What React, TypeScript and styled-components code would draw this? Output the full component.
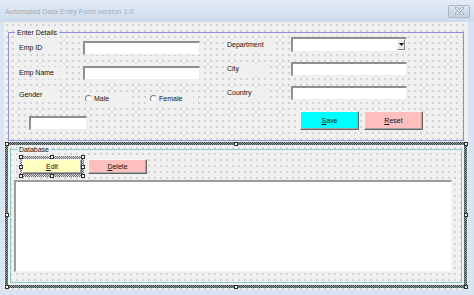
import React from 'react';
import styled, { createGlobalStyle } from 'styled-components';

const GlobalStyle = createGlobalStyle`
  html, body {
    margin: 0;
    padding: 0;
  }
  body {
    background: #d8e4f2;
    font-family: "Liberation Sans", Arial, sans-serif;
  }
`;

const dots = `
  background-color: #f0f0f0;
  background-image: radial-gradient(circle, #bcbcbc 0.55px, transparent 0.9px);
  background-size: 6px 6px;
  background-position: 0 0;
`;

const Window = styled.div`
  width: 474px;
  height: 295px;
  display: flex;
  flex-direction: column;
  background: #d8e4f2;
  overflow: hidden;
`;

const TitleBar = styled.div`
  height: 22px;
  flex: none;
  display: flex;
  align-items: center;
  justify-content: space-between;
  padding: 0 4px 0 5px;
  background: linear-gradient(#e3ecf7, #ccdaeb);
`;

const Title = styled.span`
  font-size: 7.3px;
  color: #a2acb8;
`;

const CloseButton = styled.div`
  width: 22px;
  height: 13px;
  box-sizing: border-box;
  border: 1px solid #a9b7c9;
  border-radius: 2px;
  background: linear-gradient(#dbe5f0, #c4d2e3);
  display: flex;
  align-items: center;
  justify-content: center;
`;

const Canvas = styled.div`
  flex: 1;
  margin: 0 6px 5px 4px;
  padding: 10px 0 0 4px;
  box-sizing: border-box;
  display: flex;
  flex-direction: column;
  ${dots}
`;

const Frame = styled.div<{ $color: string }>`
  position: relative;
  box-sizing: border-box;
  border: 1px solid ${p => p.$color};
`;

const Caption = styled.span`
  position: absolute;
  top: -5px;
  left: 6px;
  padding: 0 2px;
  font-size: 7px;
  line-height: 9px;
  color: #111;
  background: #f0f0f0;
`;

const DetailsFrame = styled(Frame)`
  width: 456px;
  height: 109px;
  display: flex;
  padding-left: 10px;
`;

const Column = styled.div<{ $w: number; $ml?: number }>`
  width: ${p => p.$w}px;
  margin-left: ${p => p.$ml ?? 0}px;
  display: flex;
  flex-direction: column;
`;

const Row = styled.div<{ $mt: number; $h: number; $pl?: number; $gap?: number }>`
  display: flex;
  align-items: center;
  margin-top: ${p => p.$mt}px;
  height: ${p => p.$h}px;
  padding-left: ${p => p.$pl ?? 0}px;
  gap: ${p => p.$gap ?? 0}px;
`;

const LabelSlot = styled.div<{ $top?: boolean }>`
  width: 67px;
  flex: none;
  display: flex;
  align-self: ${p => (p.$top ? 'flex-start' : 'center')};
  margin-left: -3px;
`;

const Label = styled.span<{ $w: number }>`
  width: ${p => p.$w}px;
  box-sizing: border-box;
  padding: 1px 3px 2px;
  font-size: 7px;
  line-height: 9px;
  color: #111;
  background: #f0f0f0;
`;

const TextBox = styled.div<{ $w: number; $ml?: number }>`
  width: ${p => p.$w}px;
  height: 100%;
  margin-left: ${p => p.$ml ?? 0}px;
  box-sizing: border-box;
  background: #fff;
  border-style: solid;
  border-width: 2px 1px 1px 2px;
  border-color: #8f8f8f #ececec #ececec #8f8f8f;
`;

const Combo = styled(TextBox)`
  display: flex;
  justify-content: flex-end;
  align-items: stretch;
  padding: 0 1px 1px 0;
`;

const DropButton = styled.div`
  width: 8px;
  box-sizing: border-box;
  background: #ececec;
  border-style: solid;
  border-width: 1px;
  border-color: #fafafa #7a7a7a #7a7a7a #fafafa;
  display: flex;
  align-items: center;
  justify-content: center;
`;

const RadioGroup = styled.div`
  display: flex;
  align-self: flex-end;
  height: 11px;
  margin-bottom: -1px;
`;

const RadioItem = styled.label<{ $w: number; $mr?: number }>`
  width: ${p => p.$w}px;
  margin-right: ${p => p.$mr ?? 0}px;
  display: flex;
  align-items: center;
  gap: 2px;
  padding-left: 2px;
  box-sizing: border-box;
  font-size: 7px;
  color: #111;
  background: #f0f0f0;
`;

const RadioDot = styled.span`
  width: 7px;
  height: 7px;
  flex: none;
  box-sizing: border-box;
  border-radius: 50%;
  background: #fff;
  border: 1px solid #7c7c7c;
  border-right-color: #e6e6e6;
  border-bottom-color: #e6e6e6;
`;

const CommandButton = styled.div<{ $bg: string; $w: number; $h: number }>`
  width: ${p => p.$w}px;
  height: ${p => p.$h}px;
  box-sizing: border-box;
  background: ${p => p.$bg};
  border-style: solid;
  border-width: 1px;
  border-color: #f6f6f6 #646464 #646464 #f6f6f6;
  box-shadow: inset -1px -1px 0 #a6a6a6;
  display: flex;
  align-items: center;
  justify-content: center;
  font-size: 7px;
  color: #111;
`;

const checker = (a: string, b: string) => `
  background: repeating-conic-gradient(${a} 0 25%, ${b} 0 50%) 0 0 / 2px 2px;
`;

const SelectionBox = styled.div`
  position: relative;
  margin: 1px 0 0 -3px;
  width: 462px;
  height: 146px;
  padding: 3px;
  box-sizing: border-box;
  ${checker('#3b4949', '#8c9c9c')}
`;

const DbSurface = styled.div`
  height: 100%;
  box-sizing: border-box;
  padding: 4px 2px 2px 2px;
  ${dots}
`;

const DbFrame = styled(Frame)`
  height: 100%;
  display: flex;
  flex-direction: column;
`;

const ButtonRow = styled.div`
  display: flex;
  gap: 6px;
  margin: 9px 0 0 11px;
`;

const ButtonSelection = styled.div`
  position: relative;
  margin: -3px -2px;
  padding: 3px 2px;
  ${checker('#6a6a6a', '#dcdcdc')}
`;

const ListBox = styled.div`
  margin: 6px 0 0 3px;
  width: 438px;
  height: 92px;
  box-sizing: border-box;
  background: #fff;
  border-style: solid;
  border-width: 2px 1px 1px 2px;
  border-color: #9c9c9c #f2f2f2 #f2f2f2 #9c9c9c;
`;

type HPos = 'l' | 'c' | 'r';
type VPos = 't' | 'm' | 'b';

const Handle = styled.span<{ $h: HPos; $v: VPos; $inset: number }>`
  position: absolute;
  width: 4px;
  height: 4px;
  box-sizing: border-box;
  background: #fff;
  border: 1px solid #2c2c2c;
  transform: translate(-50%, -50%);
  left: ${p => (p.$h === 'l' ? `${p.$inset}px` : p.$h === 'c' ? '50%' : `calc(100% - ${p.$inset}px)`)};
  top: ${p => (p.$v === 't' ? `${p.$inset}px` : p.$v === 'm' ? '50%' : `calc(100% - ${p.$inset}px)`)};
`;

const handleSpots: [HPos, VPos][] = [
  ['l', 't'], ['c', 't'], ['r', 't'],
  ['l', 'm'], ['r', 'm'],
  ['l', 'b'], ['c', 'b'], ['r', 'b'],
];

const Handles = ({ inset }: { inset: number }) => (
  <>
    {handleSpots.map(([h, v]) => (
      <Handle key={h + v} $h={h} $v={v} $inset={inset} />
    ))}
  </>
);

const CloseIcon = () => (
  <svg width="9" height="8" viewBox="0 0 9 8">
    <path d="M1.5 1 L7.5 7 M7.5 1 L1.5 7" stroke="#8391a3" strokeWidth="2.6" strokeLinecap="round" />
    <path d="M1.5 1 L7.5 7 M7.5 1 L1.5 7" stroke="#ffffff" strokeWidth="1.2" strokeLinecap="round" />
  </svg>
);

const ArrowIcon = () => (
  <svg width="5" height="3" viewBox="0 0 5 3">
    <path d="M0 0 H5 L2.5 3 Z" fill="#111" />
  </svg>
);

const App = () => (
  <Window>
    <GlobalStyle />
    <TitleBar>
      <Title>Automated Data Entry Form version 1.0</Title>
      <CloseButton>
        <CloseIcon />
      </CloseButton>
    </TitleBar>
    <Canvas>
      <DetailsFrame $color="#8f8fdc">
        <Caption>Enter Details</Caption>
        <Column $w={181}>
          <Row $mt={8} $h={14}>
            <LabelSlot>
              <Label $w={42}>Emp ID</Label>
            </LabelSlot>
            <TextBox $w={117} />
          </Row>
          <Row $mt={11} $h={14}>
            <LabelSlot>
              <Label $w={48}>Emp Name</Label>
            </LabelSlot>
            <TextBox $w={117} />
          </Row>
          <Row $mt={9} $h={14}>
            <LabelSlot $top>
              <Label $w={42}>Gender</Label>
            </LabelSlot>
            <RadioGroup>
              <RadioItem $w={45} $mr={20}>
                <RadioDot />
                Male
              </RadioItem>
              <RadioItem $w={45}>
                <RadioDot />
                Female
              </RadioItem>
            </RadioGroup>
          </Row>
          <Row $mt={13} $h={14}>
            <TextBox $w={58} $ml={10} />
          </Row>
        </Column>
        <Column $w={196} $ml={27}>
          <Row $mt={4} $h={15}>
            <LabelSlot>
              <Label $w={50}>Department</Label>
            </LabelSlot>
            <Combo $w={116}>
              <DropButton>
                <ArrowIcon />
              </DropButton>
            </Combo>
          </Row>
          <Row $mt={10} $h={14}>
            <LabelSlot>
              <Label $w={42}>City</Label>
            </LabelSlot>
            <TextBox $w={116} />
          </Row>
          <Row $mt={10} $h={14}>
            <LabelSlot>
              <Label $w={42}>Country</Label>
            </LabelSlot>
            <TextBox $w={116} />
          </Row>
          <Row $mt={11} $h={19} $pl={73} $gap={5}>
            <CommandButton $bg="#00ffff" $w={59} $h={19}>
              <span><u>S</u>ave</span>
            </CommandButton>
            <CommandButton $bg="#ffbfbf" $w={59} $h={19}>
              <span><u>R</u>eset</span>
            </CommandButton>
          </Row>
        </Column>
      </DetailsFrame>
      <SelectionBox>
        <DbSurface>
          <DbFrame $color="#8ccaca">
            <Caption>Database</Caption>
            <ButtonRow>
              <ButtonSelection>
                <CommandButton $bg="#ffffc0" $w={60} $h={15}>
                  <span><u>E</u>dit</span>
                </CommandButton>
                <Handles inset={1} />
              </ButtonSelection>
              <CommandButton $bg="#ffbfbf" $w={59} $h={15}>
                <span><u>D</u>elete</span>
              </CommandButton>
            </ButtonRow>
            <ListBox />
          </DbFrame>
        </DbSurface>
        <Handles inset={1.5} />
      </SelectionBox>
    </Canvas>
  </Window>
);

export default App;
